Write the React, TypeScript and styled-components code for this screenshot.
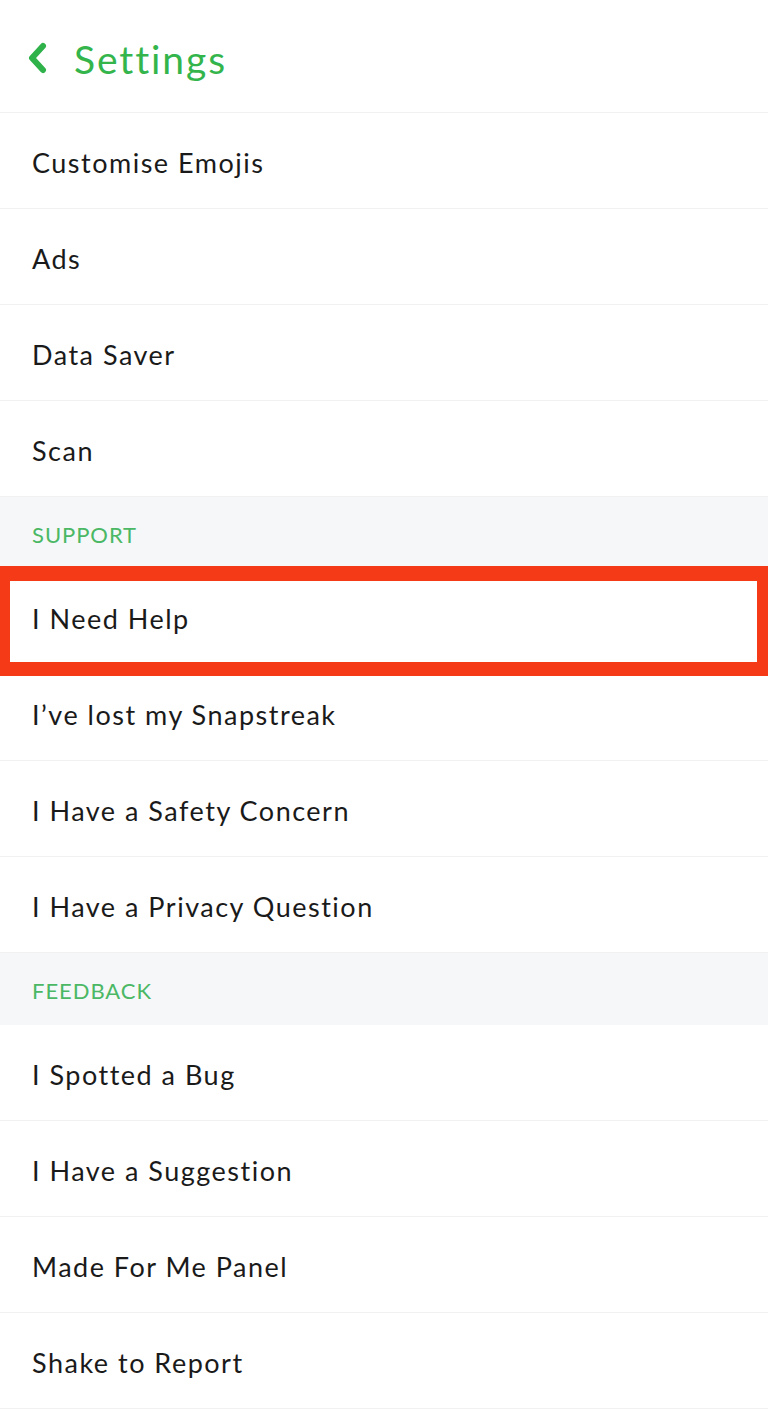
import React from "react";
import styled, { createGlobalStyle } from "styled-components";

type Item = { label: string; highlighted?: boolean };
type Section = { title?: string; items: Item[] };

const sections: Section[] = [
  {
    items: [
      { label: "Customise Emojis" },
      { label: "Ads" },
      { label: "Data Saver" },
      { label: "Scan" },
    ],
  },
  {
    title: "SUPPORT",
    items: [
      { label: "I Need Help", highlighted: true },
      { label: "I\u2019ve lost my Snapstreak" },
      { label: "I Have a Safety Concern" },
      { label: "I Have a Privacy Question" },
    ],
  },
  {
    title: "FEEDBACK",
    items: [
      { label: "I Spotted a Bug" },
      { label: "I Have a Suggestion" },
      { label: "Made For Me Panel" },
      { label: "Shake to Report" },
    ],
  },
];

const App: React.FC = () => {
  return (
    <>
      <GlobalStyle />
      <Page>
        <Header>
          <BackButton aria-label="Back">
            <svg width="22" height="32" viewBox="0 0 22 32" fill="none">
              <path
                d="M17 4 L6 16 L17 28"
                stroke="#2fb24a"
                strokeWidth="6"
                strokeLinecap="round"
                strokeLinejoin="round"
              />
            </svg>
          </BackButton>
          <Title>Settings</Title>
        </Header>

        {sections.map((section, i) => (
          <React.Fragment key={i}>
            {section.title && <SectionHeader>{section.title}</SectionHeader>}
            {section.items.map((item) => (
              <Row key={item.label}>
                <RowLabel>{item.label}</RowLabel>
                {item.highlighted && <Highlight />}
              </Row>
            ))}
          </React.Fragment>
        ))}
      </Page>
    </>
  );
};

const GlobalStyle = createGlobalStyle`
  html, body {
    margin: 0;
    padding: 0;
    background: #ffffff;
  }

  body {
    font-family: Lato, "Noto Sans", "Liberation Sans", sans-serif;
    -webkit-font-smoothing: antialiased;
  }
`;

const Page = styled.main`
  width: 768px;
  min-height: 1415px;
  background: #ffffff;
  display: flex;
  flex-direction: column;
`;

const Header = styled.header`
  height: 113px;
  display: flex;
  align-items: center;
  gap: 26px;
  padding: 6px 0 0 26px;
  box-sizing: border-box;
  border-bottom: 1px solid #f1f1f1;
`;

const BackButton = styled.button`
  border: 0;
  background: none;
  padding: 0 0 2px;
  display: flex;
  align-items: center;
  cursor: pointer;
`;

const Title = styled.h1`
  margin: 0;
  font-size: 39px;
  font-weight: 400;
  letter-spacing: 1.9px;
  color: #34b54c;
`;

const Row = styled.div`
  position: relative;
  height: 96px;
  box-sizing: border-box;
  display: flex;
  align-items: center;
  padding: 0 32px;
  border-bottom: 1px solid #f1f1f1;
  background: #ffffff;
`;

const RowLabel = styled.span`
  font-size: 27px;
  color: #1a1a1a;
  letter-spacing: 1.5px;
  padding-top: 4px;
`;

const SectionHeader = styled.div`
  height: 72px;
  box-sizing: border-box;
  display: flex;
  align-items: center;
  padding: 2px 32px 0;
  background: #f6f7f8;
  font-size: 22px;
  letter-spacing: 0.95px;
  color: #4bb865;
`;

const Highlight = styled.div`
  position: absolute;
  left: 0;
  right: 0;
  top: -3px;
  height: 110px;
  box-sizing: border-box;
  border-style: solid;
  border-color: #f43a17;
  border-width: 15px 11px 14px 10px;
  pointer-events: none;
  z-index: 1;
`;

export default App;
